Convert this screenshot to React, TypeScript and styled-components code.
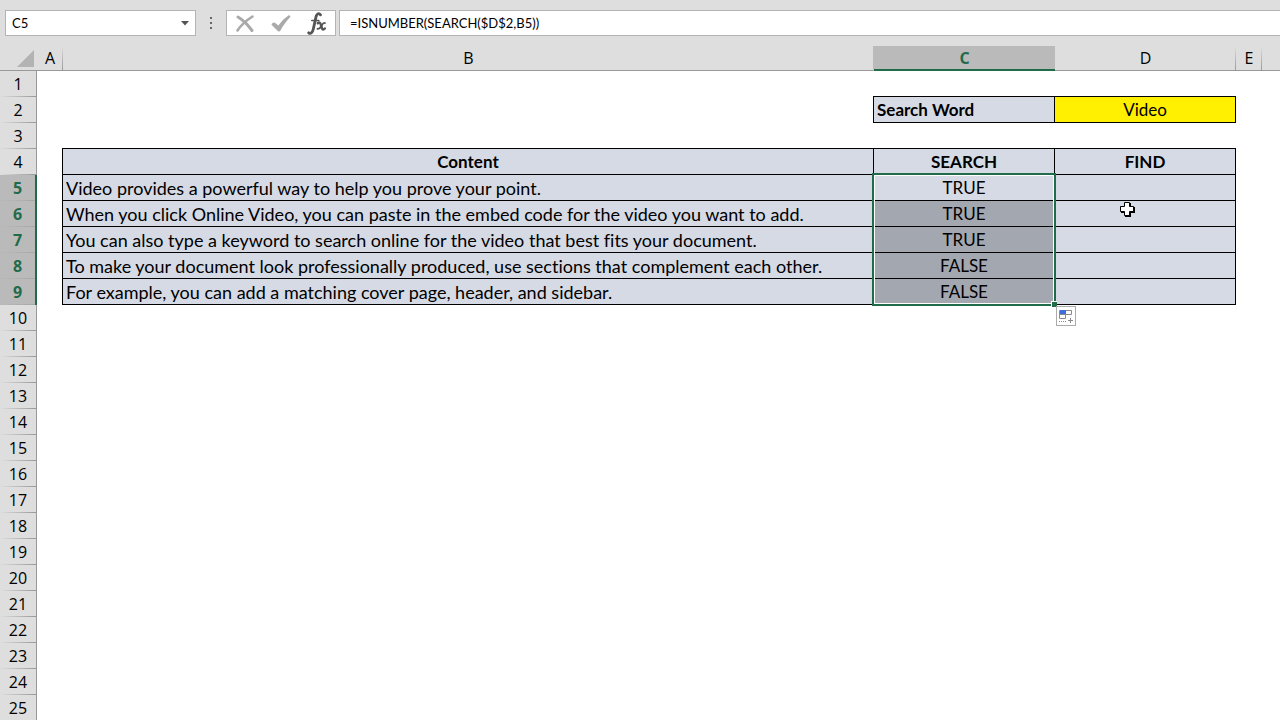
import React from "react";
import styled, { createGlobalStyle, css } from "styled-components";

const GREEN = "#1f6b4a";
const CHROME = "#dedede";
const RULE = "#999999";

const GlobalStyle = createGlobalStyle`
  *, *::before, *::after { box-sizing: border-box; }
  body { margin: 0; background: #fff; color: #000; font-family: Lato, "Liberation Sans", sans-serif; font-variant-ligatures: none; }
  button, input { font: inherit; color: inherit; }
`;

const Shell = styled.div`
  display: flex;
  flex-direction: column;
  height: 100vh;
  overflow: hidden;
`;

const FormulaBar = styled.header`
  display: flex;
  flex: none;
  height: 46px;
  padding: 10px 0 10px 5px;
  background: ${CHROME};
`;

const NameBox = styled.div`
  display: flex;
  width: 191px;
  background: #fff;
  border: 1px solid #b4b4b4;
`;

const BarInput = styled.input<{ $indent: number }>`
  flex: 1;
  min-width: 0;
  padding: 0 0 0 ${(p) => p.$indent}px;
  border: 0;
  outline: 0;
  background: transparent;
  font-size: 13px;
`;

const IconButton = styled.button<{ $width: number }>`
  display: flex;
  align-items: center;
  justify-content: center;
  width: ${(p) => p.$width}px;
  padding: 0;
  border: 0;
  background: transparent;
`;

const Grip = styled.div`
  display: flex;
  align-items: center;
  justify-content: center;
  width: 30px;
`;

const Actions = styled.div`
  display: flex;
  width: 110px;
  background: #fff;
  border: 1px solid #b4b4b4;
`;

const FormulaField = styled.div`
  display: flex;
  flex: 1;
  margin-left: 3px;
  background: #fff;
  border: 1px solid #b4b4b4;
  border-right: 0;
`;

const SheetArea = styled.main`
  flex: 1;
  min-height: 0;
  overflow: hidden;
`;

const Sheet = styled.table`
  width: 100%;
  table-layout: fixed;
  border-collapse: separate;
  border-spacing: 0;
  font-size: 17px;
  line-height: 24px;
`;

const Col = styled.col<{ $width?: number }>`
  width: ${(p) => (p.$width ? `${p.$width}px` : "auto")};
`;

const Corner = styled.td`
  height: 25px;
  padding: 0 3px 3px 0;
  background: ${CHROME};
  border-bottom: 1px solid ${RULE};
  line-height: 0;
  text-align: right;
  vertical-align: bottom;
`;

const ColumnHead = styled.th<{ $active?: boolean; $divider?: boolean }>`
  height: 25px;
  padding: 0;
  font-family: "Open Sans", "Noto Sans", sans-serif;
  font-size: 16px;
  font-weight: 400;
  line-height: 24px;
  background: ${CHROME};
  border-bottom: 1px solid ${RULE};
  ${(p) =>
    p.$divider &&
    css`
      background: linear-gradient(${CHROME}, ${RULE}) right / 1px 100% no-repeat, ${CHROME};
    `}
  ${(p) =>
    p.$active &&
    css`
      position: relative;
      color: ${GREEN};
      font-weight: 700;
      background: #bababa;
      border-bottom-color: ${GREEN};
      box-shadow: inset 0 -1px ${GREEN}, -1px 0 #bababa;
    `}
`;

const RowHead = styled.th<{ $active: boolean }>`
  height: 26px;
  padding: 0;
  font-family: "Open Sans", "Noto Sans", sans-serif;
  font-size: 16px;
  font-weight: 400;
  line-height: 25px;
  border-right: 1px solid ${RULE};
  background: linear-gradient(90deg, ${CHROME}, ${RULE}) bottom / 100% 1px no-repeat, ${CHROME};
  ${(p) =>
    p.$active &&
    css`
      color: ${GREEN};
      font-weight: 700;
      border-right: 2px solid ${GREEN};
      background: linear-gradient(90deg, #bababa, #a6a6a6) bottom / 100% 1px no-repeat, #bababa;
    `}
`;

const Cell = styled.td<{
  $fill?: string;
  $center?: boolean;
  $bold?: boolean;
  $large?: boolean;
}>`
  position: relative;
  height: 26px;
  padding: 0 3px;
  background: #fff;
  border: solid transparent;
  border-width: 0 1px 1px 0;
  text-align: ${(p) => (p.$center ? "center" : "left")};
  font-size: ${(p) => (p.$large ? 18 : 17)}px;
  font-weight: ${(p) => (p.$bold ? 700 : 400)};
  white-space: nowrap;
  ${(p) =>
    p.$fill &&
    css`
      background: ${p.$fill};
      border-color: #000;
      box-shadow: -1px -1px #000, 0 -1px #000, -1px 0 #000;
    `}
`;

const SelectionFrame = styled.div`
  position: absolute;
  z-index: 1;
  top: -2px;
  left: -2px;
  right: -2px;
  height: 133px;
  border: 2px solid ${GREEN};
  box-shadow: inset 0 0 0 1px #fff;
  pointer-events: none;
`;

const FillHandle = styled.div`
  position: absolute;
  z-index: 2;
  right: -3px;
  bottom: -3px;
  width: 6px;
  height: 6px;
  background: ${GREEN};
  border: solid #fff;
  border-width: 1px 0 0 1px;
`;

const FillOptions = styled.button`
  position: absolute;
  z-index: 2;
  top: 27px;
  left: calc(100% + 2px);
  width: 20px;
  height: 20px;
  padding: 0;
  border: 1px solid #ababab;
  background: #fff;
  line-height: 0;
`;

const Pointer = styled.svg`
  position: absolute;
  z-index: 3;
  top: 0;
  left: calc(50% - 26px);
`;

type CellData = { text?: string; fill?: string; center?: boolean; bold?: boolean; large?: boolean };

const COLUMNS = ["A", "B", "C", "D", "E", ""];
const WIDTHS = [26, undefined, 181, 181, 26, 18];
const BLUE = "#d6dae4";
const SELECTED = "#a3a7b0";

const cells: Record<string, CellData> = {
  C2: { text: "Search Word", fill: BLUE, bold: true },
  D2: { text: "Video", fill: "#ffef00", center: true },
  B4: { text: "Content", fill: BLUE, bold: true, center: true },
  C4: { text: "SEARCH", fill: BLUE, bold: true, center: true },
  D4: { text: "FIND", fill: BLUE, bold: true, center: true },
};

const records: [string, string][] = [
  ["Video provides a powerful way to help you prove your point.", "TRUE"],
  ["When you click Online Video, you can paste in the embed code for the video you want to add.", "TRUE"],
  ["You can also type a keyword to search online for the video that best fits your document.", "TRUE"],
  ["To make your document look professionally produced, use sections that complement each other.", "FALSE"],
  ["For example, you can add a matching cover page, header, and sidebar.", "FALSE"],
];

records.forEach(([content, found], i) => {
  const row = 5 + i;
  cells[`B${row}`] = { text: content, fill: BLUE, large: true };
  cells[`C${row}`] = { text: found, fill: i === 0 ? BLUE : SELECTED, center: true };
  cells[`D${row}`] = { fill: BLUE };
});

const rows = Array.from({ length: 25 }, (_, i) => i + 1);
const isSelectedRow = (row: number) => row >= 5 && row <= 9;

export default function App() {
  return (
    <Shell>
      <GlobalStyle />
      <FormulaBar>
        <NameBox>
          <BarInput $indent={6} aria-label="Name box" defaultValue="C5" />
          <IconButton $width={20} aria-label="Open name list">
            <svg width="8" height="5" viewBox="0 0 8 5"><path d="M0 0h8L4 4.5z" fill="#555" /></svg>
          </IconButton>
        </NameBox>
        <Grip>
          <svg width="3" height="12" viewBox="0 0 3 12" fill="#666">
            <path d="M0 0h2v2H0zM0 5h2v2H0zM0 10h2v2H0z" />
          </svg>
        </Grip>
        <Actions>
          <IconButton $width={36} aria-label="Cancel">
            <svg width="18" height="17" viewBox="0 0 18 17" fill="none" stroke="#aaa" strokeLinecap="round">
              <path d="M2 2C7 5 12 10 16 15.5" strokeWidth="3" />
              <path d="M16.5 1.5C11 5 5 10 1.5 15.5" strokeWidth="2.6" />
            </svg>
          </IconButton>
          <IconButton $width={36} aria-label="Enter">
            <svg width="20" height="17" viewBox="0 0 20 17" fill="#aaa">
              <path d="M0.5 9.8C1.2 7.800 3.300 6.800 4.600 8.200l2.800 2.300C10 6.500 14 2.500 17.500.4c1.200-.6 2.400 .9 1.600 1.900C15.200 6.300 12.300 10.500 9.500 15.400c-.7 1.400-2.300 1.400-3.200.1z" />
            </svg>
          </IconButton>
          <IconButton $width={36} aria-label="Insert function">
            <svg width="20" height="23" viewBox="0 0 20 23" fill="none" stroke="#555" strokeLinecap="round">
              <path d="M13.5 2.8C12 .8 9.800 1.500 9 4.800L6.200 17.500C5.500 20.600 3.500 22.300 1.700 20.800" strokeWidth="2.800" />
              <path d="M4.800 8.500h7" strokeWidth="1.600" />
              <path d="M10.800 11.200c1.600-1.300 2.500-.4 3 1.300l1.100 3.600c.5 1.600 1.600 1.900 2.900.4" strokeWidth="2.500" />
              <path d="M18 11c-1.300-.4-2.200.5-3.500 2.800-1.300 2.300-2.400 3.600-4 3" strokeWidth="1.800" />
            </svg>
          </IconButton>
        </Actions>
        <FormulaField>
          <BarInput $indent={10} aria-label="Formula" defaultValue="=ISNUMBER(SEARCH($D$2,B5))" />
        </FormulaField>
      </FormulaBar>
      <SheetArea>
        <Sheet>
          <colgroup>
            <Col $width={37} />
            {WIDTHS.map((w, i) => <Col key={i} $width={w} />)}
          </colgroup>
          <thead>
            <tr>
              <Corner>
                <svg width="17" height="17" viewBox="0 0 17 17"><path d="M17 0v17H0z" fill="#b3b3b3" /></svg>
              </Corner>
              {COLUMNS.map((name) => (
                <ColumnHead
                  key={name}
                  scope="col"
                  $active={name === "C"}
                  $divider={name === "A" || name === "D" || name === "E"}
                >
                  {name}
                </ColumnHead>
              ))}
            </tr>
          </thead>
          <tbody>
            {rows.map((row) => (
              <tr key={row}>
                <RowHead scope="row" $active={isSelectedRow(row)}>{row}</RowHead>
                {COLUMNS.map((name) => {
                  const id = `${name}${row}`;
                  const cell = cells[id] ?? {};
                  return (
                    <Cell
                      key={id}
                      $fill={cell.fill}
                      $center={cell.center}
                      $bold={cell.bold}
                      $large={cell.large}
                    >
                      {cell.text}
                      {id === "C5" && <SelectionFrame />}
                      {id === "C9" && (
                        <>
                          <FillHandle />
                          <FillOptions aria-label="Auto fill options">
                            <svg width="18" height="18" viewBox="0 0 18 18" fill="none">
                              <path d="M2.5 3.5h12v4h-12zM2.5 7.5h6v4h-6zM8.5 3.5v4" stroke="#8a8a8a" />
                              <path d="M3 3h6v4H3z" fill="#3f6fd8" />
                              <path d="M2 14.5h8" stroke="#8a8a8a" strokeDasharray="1 1" />
                              <path d="M13.5 11v5M11 13.5h5" stroke="#8a8a8a" />
                            </svg>
                          </FillOptions>
                        </>
                      )}
                      {id === "D6" && (
                        <Pointer width="17" height="17" viewBox="0 0 17 17" aria-hidden="true">
                          <path d="M6 2h6v4h4v6h-4v4H6v-4H2V6h4z" fill="#000" />
                          <path d="M5.5 1.5h5v4h4v5h-4v4h-5v-4h-4v-5h4z" fill="#fff" stroke="#000" />
                        </Pointer>
                      )}
                    </Cell>
                  );
                })}
              </tr>
            ))}
          </tbody>
        </Sheet>
      </SheetArea>
    </Shell>
  );
}
